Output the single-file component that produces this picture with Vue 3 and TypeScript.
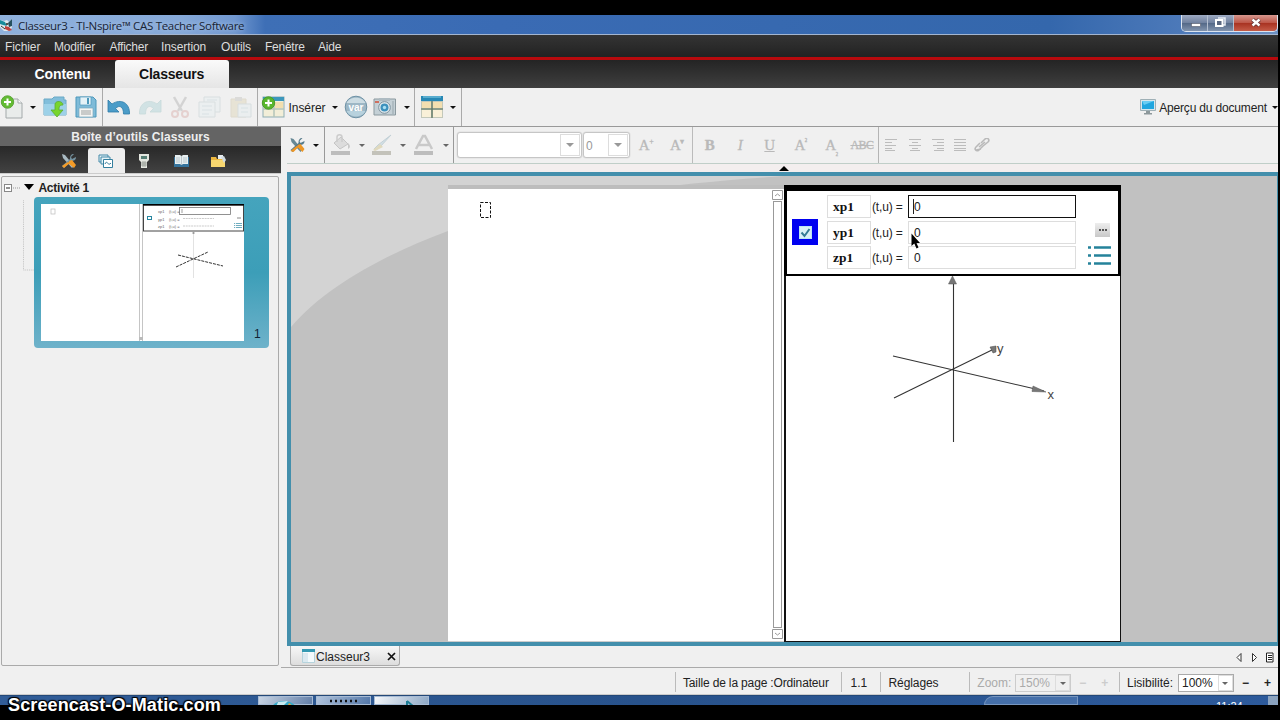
<script setup lang="ts">
interface MenuItem { label: string; cls: string }

const menus: MenuItem[] = [
  { label: 'Fichier', cls: 'm-file' },
  { label: 'Modifier', cls: 'm-edit' },
  { label: 'Afficher', cls: 'm-view' },
  { label: 'Insertion', cls: 'm-insert' },
  { label: 'Outils', cls: 'm-tools' },
  { label: 'Fenêtre', cls: 'm-window' },
  { label: 'Aide', cls: 'm-help' },
]
const params: string[] = ['xp1', 'yp1', 'zp1']
const aligns: string[] = [
  'M0 1.5h12M0 4.5h7M0 7.5h11M0 10.5h7M0 12.5h10',
  'M0 1.5h12M3 4.5h6M0 7.5h12M3 10.5h6M1 12.5h10',
  'M0 1.5h12M5 4.5h7M1 7.5h11M5 10.5h7M2 12.5h10',
  'M0 1.5h12M0 4.5h12M0 7.5h12M0 10.5h12M0 12.5h12',
]
</script>

<template>
  <div class="screen">
    <header class="titlebar">
      <svg class="app-icon" width="14" height="14" viewBox="0 0 14 14"><path d="M0 2l4 1 3-1 2 2 3-3v8l-2 4H4L0 9z" fill="#dfe9ee" /><path d="M0 2l5 2 2 4-4-1-3-1z" fill="#178a9c" /><path d="M8 5l4-4v7l-3 1z" fill="#26515f" /><path d="M5 8l4 1 3 3-3 1-4-2z" fill="#c0413d" /><path d="M1 8l4 3" stroke="#333" /><circle cx="7" cy="6" r="1" fill="#222" /></svg>
      <span class="app-title">Classeur3 - TI-Nspire™ CAS Teacher Software</span>
      <div class="win-btns">
        <span class="wb"><svg width="27" height="16" viewBox="0 0 27 16"><rect x="9.500" y="8.500" width="9" height="3" fill="#fff" stroke="#555b6b" stroke-width=".6" /></svg></span>
        <span class="wb wb-max"><svg width="26" height="16" viewBox="0 0 26 16"><path d="M10 3h7v7h-2" fill="none" stroke="#e8edf5" stroke-width="1.500" /><rect x="8" y="5" width="6.500" height="6" fill="#596780" stroke="#fff" stroke-width="2" /></svg></span>
        <span class="wb wb-close"><svg width="43" height="16" viewBox="0 0 43 16"><path d="M18.500 4.500l7 6m0-6l-7 6" stroke="#5d3034" stroke-width="4" /><path d="M18.500 4.500l7 6m0-6l-7 6" stroke="#fff" stroke-width="2.400" /></svg></span>
      </div>
    </header>
    <nav class="menubar">
      <span v-for="m in menus" :key="m.label" :class="m.cls">{{ m.label }}</span>
    </nav>
    <div class="maintabs">
      <span class="mt-contents">Contenu</span>
      <span class="mt-active">Classeurs</span>
    </div>

    <div class="toolbar">
      <svg width="24" height="24" viewBox="0 0 24 24"><path d="M6 4h12l4 4v15H6z" fill="#e9eceb" stroke="#a3a9aa" /><path d="M18 4v4h4" fill="#fff" stroke="#a3a9aa" /><circle cx="7.500" cy="7" r="6.200" fill="#62bc32" stroke="#5fa53c" /><path d="M7.500 3.500v7M4 7h7" stroke="#fff" stroke-width="2" /></svg>
      <i class="caret"></i>
      <svg width="24" height="22" viewBox="0 0 24 22"><path d="M1 3h8l2-2h10v3h2v15H1z" fill="#82bedb" stroke="#6aa9c6" /><path d="M1 8h22v11H1z" fill="#9dd1e8" /><path d="M20 9c0-4-7-5-8-1v6H8l6 7 6-7h-4c0-4 1-5 4-5z" fill="#78d52d" stroke="#5cab32" stroke-width=".8" /></svg>
      <svg width="22" height="22" viewBox="0 0 22 22"><path d="M1 1h17l3 3v17H1z" fill="#7fbbd8" stroke="#4d98bb" /><path d="M5 1h11v8H5z" fill="#e5f2f7" stroke="#4d98bb" stroke-width=".7" /><path d="M12 2h2v6h-2z" fill="#4d98bb" /><path d="M4 12h14v9H4z" fill="#f5f5f3" stroke="#7ca9bd" stroke-width=".7" /><path d="M6 14h10v5H6z" fill="#c9cbca" /></svg>
      <i class="sep"></i>
      <svg width="24" height="18" viewBox="0 0 24 18"><path d="M1 2v12h11L8.500 10.500c4-4 8-2 8 5.500h6C23 5 14 0 5 6z" fill="#4b9cc8" stroke="#2d7ca8" stroke-width=".8" /></svg>
      <svg class="faded" width="24" height="18" viewBox="0 0 24 18"><path d="M23 2v12H12l3.500-3.500c-4-4-8-2-8 5.500h-6C1 5 10 0 19 6z" fill="#a5ced3" stroke="#8bbabd" stroke-width=".8" /></svg>
      <svg class="faded" width="20" height="22" viewBox="0 0 20 22"><path d="M4 1l8 14M16 1L8 15" stroke="#aaa" stroke-width="2.500" /><circle cx="5" cy="18" r="3" fill="none" stroke="#d6a4a0" stroke-width="2" /><circle cx="15" cy="18" r="3" fill="none" stroke="#d6a4a0" stroke-width="2" /></svg>
      <svg class="faded" width="24" height="22" viewBox="0 0 24 22"><path d="M6 1h16v15H6z" fill="#e5eef0" stroke="#b8c6ca" /><path d="M1 6h16v15H1z" fill="#e5eef0" stroke="#b8c6ca" /><path d="M4 10h10M4 14h10M4 18h7M9 4h10" stroke="#b8cdd4" /></svg>
      <svg class="faded" width="22" height="22" viewBox="0 0 22 22"><path d="M1 3h15v18H1z" fill="#dcd0ae" stroke="#c6bc9d" /><path d="M5 1h7v4H5z" fill="#bdbdb8" /><path d="M8 8h13v13H8z" fill="#e2edef" stroke="#b4c4c9" /><path d="M11 12h7M11 16h7" stroke="#b8cdd4" /></svg>
      <i class="sep"></i>
      <svg class="ins" width="24" height="24" viewBox="0 0 24 24"><rect x="2" y="2" width="21" height="20" fill="#f2eed8" stroke="#8faeb4" /><path d="M2 2h21v4H2z" fill="#3c97bc" /><path d="M2 14h21M13 6v16" stroke="#b4c5b9" stroke-width="1.500" /><path d="M14 7h8v6h-8z" fill="#f2dfaf" /><circle cx="7.500" cy="8" r="6.200" fill="#58b62d" stroke="#4b9c2a" /><path d="M7.500 4.500v7M4 8h7" stroke="#fff" stroke-width="2" /></svg>
      <span class="t-insert">Insérer</span>
      <i class="caret"></i>
      <svg width="24" height="24" viewBox="0 0 24 24"><circle cx="12" cy="12" r="10.800" fill="#9db7c5" stroke="#6d91a5" /><path d="M2.500 8c3-7 16-7 19 0z" fill="#ccdce3" /><path d="M2.500 16c3 7 16 7 19 0z" fill="#b7d1dd" /><text x="12" y="15.500" text-anchor="middle" class="var-text">var</text></svg>
      <svg width="24" height="20" viewBox="0 0 24 20"><path d="M1 2h21.500v16H1z" fill="#c4d0d6" stroke="#8b999f" /><path d="M6 1h11v3H6z" fill="#aebbc2" /><path d="M2 4h4v2H2z" fill="#cf6f5f" /><path d="M20 4v13" stroke="#98a6ad" /><circle cx="11.500" cy="10.500" r="5.800" fill="#e6edf0" stroke="#7b909d" /><circle cx="11.500" cy="10.500" r="4" fill="#3d91bd" /><circle cx="11.500" cy="10.500" r="1.700" fill="#a9dff2" /></svg>
      <i class="caret"></i>
      <i class="sep"></i>
      <svg width="22" height="22" viewBox="0 0 22 22"><path d="M0 0h22v22H0z" fill="#c3c8ba" /><path d="M0 0h22v5H0z" fill="#2788b5" /><path d="M2 1h18" stroke="#8ad1e8" /><path d="M1 6h9v6H1zM12 6h9v6h-9z" fill="#f3dfb0" /><path d="M1 14h9v7H1zM12 14h9v7h-9z" fill="#f9f0d8" /><path d="M11 5v17M0 13h22" stroke="#55705d" stroke-width="1.200" /></svg>
      <i class="caret"></i>
      <i class="sep"></i>
      <span></span>
      <svg width="16" height="16" viewBox="0 0 16 16"><path d="M.5.5h15v11H.5z" fill="#d6e7ed" stroke="#9fb0b6" /><path d="M2 2h12v8H2z" fill="#20a6df" /><path d="M2 2h12L4 6z" fill="#68cdf3" /><path d="M6 12h4v2h2v1.500H4V14h2z" fill="#8d989b" /></svg>
      <span class="t-preview">Aperçu du document</span>
      <i class="caret last"></i>
    </div>

    <main class="body">
      <aside class="sidebar">
        <h2>Boîte d’outils Classeurs</h2>
        <div class="side-tabs">
          <span><svg width="16" height="16" viewBox="0 0 16 16"><path d="M1 1l3 1 9 11-2 2L2 5z" fill="#a9bac2" /><path d="M13 1l-3 3 1 2 4-2c0 3-2 4-5 4L3 15l-2-2 8-7c0-3 1-5 4-5z" fill="#75929f" /><path d="M8 8l3-1 4 5-2 3-5-4zM7 9l2 1-6 5-2-2z" fill="#f49b27" /></svg></span>
          <span class="on"><svg width="16" height="15" viewBox="0 0 16 15"><path d="M1 1h9v7H1z" fill="#e6f3f7" stroke="#4389a8" /><path d="M3 3h9v7H3z" fill="#e6f3f7" stroke="#4389a8" /><path d="M5.500 5.500h9v8h-9z" fill="#fff" stroke="#347f9e" /><path d="M7 10c2-5 3 3 6-1" fill="none" stroke="#357b98" /></svg></span>
          <span><svg width="10" height="14" viewBox="0 0 10 14"><path d="M0 0h10v6L8 8v6H2V8L0 6z" fill="#e3e6df" /><path d="M2 2h6v3H2z" fill="#567e74" /><path d="M4 7v6M6 7v6M2 9h6M2 11h6" stroke="#848984" stroke-width=".7" /></svg></span>
          <span><svg width="15" height="12" viewBox="0 0 15 12"><path d="M0 2l7 1 8-1v10H0z" fill="#35739c" /><path d="M1 0h5l1.500 1L9 0h5v9H9l-1.500 1L6 9H1z" fill="#e7eff1" /><path d="M7.500 1v9M2 3h4M2 5h4M2 7h4M9 3h4M9 5h4M9 7h4" stroke="#aab9bf" stroke-width=".7" /></svg></span>
          <span><svg width="16" height="14" viewBox="0 0 16 14"><path d="M0 3h5l1 2h8v8H0z" fill="#edb73f" /><path d="M7 1h5v4H7z" fill="#e8edf0" /><path d="M0 6h14v7H0z" fill="#f8d770" /><path d="M10 3l3-1 2 4-2 3z" fill="#d1dbe1" /></svg></span>
        </div>
        <section class="tree">
          <div class="tree-row"><svg width="35" height="14" viewBox="0 0 35 14"><rect x="1.500" y="3.500" width="7" height="7" fill="#fff" stroke="#888" /><path d="M3 7h4" stroke="#222" /><path d="M10 7h8" stroke="#999" stroke-dasharray="1 1" /><path d="M21 3h10l-5 6z" fill="#000" /></svg><span>Activité 1</span></div>
          <div class="card-row">
            <svg class="branch" width="12" height="80" viewBox="0 0 12 80"><path d="M.500 0v76H12" fill="none" stroke="#bbb" stroke-dasharray="1 1" /></svg>
            <div class="card">
              <svg width="203" height="137" viewBox="0 0 203 137"><path d="M0 0h203v137H0z" fill="#fff" /><rect x="10" y="5" width="4" height="5" fill="none" stroke="#bbb" stroke-width=".7" /><path d="M98.500 0v137M101.500 0v137" stroke="#c5c5c5" /><path d="M98 133h4v3h-4z" fill="#bbb" /><rect x="102.500" y="1" width="100" height="26" fill="#fff" stroke="#444" /><path d="M102 0h101v1.500H102z" /><rect x="106.500" y="12.500" width="4" height="3" fill="#fff" stroke="#27869f" /><rect x="138.500" y="3.500" width="51" height="7" fill="#fff" stroke="#777" stroke-width=".8" /><path d="M141 5v4" stroke="#777" stroke-width=".7" /><g class="tiny"><text x="117" y="9">xp1</text><text x="128" y="9">(t,u) =</text><text x="117" y="16.500">yp1</text><text x="128" y="16.500">(t,u) =</text><text x="117" y="24">zp1</text><text x="128" y="24">(t,u) =</text></g><path d="M142 14.500h31M142 22h31" stroke="#ccc" stroke-width="1.200" stroke-dasharray="2 .7" /><path d="M196 14h4" stroke="#888" /><path d="M193 19.500h8M193 21.500h8M193 23.500h8" stroke="#4a98ae" stroke-width=".8" stroke-dasharray="1.200 .8 6" /><path d="M152.500 28v46" stroke="#e2e2e2" /><path d="M151.500 29h2" stroke="#555" /><path d="M137 51l45 11M135 63l32-15" fill="none" stroke="#333" stroke-dasharray="3 1" /></svg>
              <b>1</b>
            </div>
          </div>
        </section>
      </aside>

      <section class="work">
        <div class="format">
          <svg width="17" height="16" viewBox="0 0 16 16"><path d="M1 1l3 1 9 11-2 2L2 5z" fill="#668895" /><path d="M13 1l-3 3 1 2 4-2c0 3-2 4-5 4L3 15l-2-2 8-7c0-3 1-5 4-5z" fill="#547989" /><path d="M8 8l3-1 4 5-2 3-5-5zM7 9l2 1-5 5-3-1z" fill="#ee9624" /></svg>
          <i class="caret"></i><i class="sep dark"></i>
          <svg width="22" height="22" viewBox="0 0 22 22"><path d="M4 9l7-6 7 7-8 5z" fill="#dcdcdc" stroke="#c5c5c5" /><path d="M7 8V3c0-3 5-3 5 0v5" fill="none" stroke="#ccc" stroke-width="1.500" /><path d="M18 9c3 3 2 5 0 6z" fill="#c9c9c9" /><path d="M1 17h19v4H1z" fill="#bdbdbd" /></svg>
          <i class="caret soft"></i>
          <svg width="22" height="22" viewBox="0 0 22 22"><path d="M20 1L9 13l-4 3-2-1 4-4z" fill="#d3e0e6" stroke="#c2d0d6" /><path d="M9 10l3 3-8 4-2-1z" fill="#e0d9bd" /><path d="M1 17h19v4H1z" fill="#c3c2ba" /></svg>
          <i class="caret soft"></i>
          <svg width="22" height="22" viewBox="0 0 22 22"><path d="M3 15L10 2h2l7 13M6 11h10" fill="none" stroke="#c9c9c9" stroke-width="2.500" /><path d="M1 17h19v4H1z" fill="#bdbdbd" /></svg>
          <i class="caret soft"></i><i class="sep dark"></i><span></span>
          <div class="combo"><span></span><i><b></b></i></div><span></span>
          <div class="combo small"><span>0</span><i><b></b></i></div>
          <span class="fmt">A<sup>+</sup></span><span class="fmt">A<sup>▾</sup></span><i class="sep"></i>
          <span class="fmt bold">B</span><span class="fmt ital">I</span><span class="fmt under">U</span>
          <span class="fmt">A<sup>²</sup></span><span class="fmt">A<sub>₂</sub></span><span class="fmt strike">ABC</span><i class="sep wide"></i>
          <svg v-for="d in aligns" :key="d" width="12" height="14" viewBox="0 0 12 14"><path :d="d" stroke="#bcbcbc" stroke-width="1.100" /></svg>
          <svg width="16" height="14" viewBox="0 0 16 14"><path d="M7 5l4-4c3-2 5 1 3 3l-5 4M9 8l-4 4c-3 2-5-1-3-3l4-4M5 9l6-5M2 12l5-1" fill="none" stroke="#b9b9b9" stroke-width="1.600" /></svg>
        </div>
        <div class="collapse"><i></i></div>
        <div class="doc">
          <svg class="backdrop" width="986" height="466" viewBox="0 0 986 466"><path d="M0 151C35 110 95 78 157 55 235 27 350 10 480 1L493 0h494v466H0z" fill="#c1c1c1" /></svg>
          <div class="page">
            <div class="notes">
              <div class="note-body"><svg width="12" height="16" viewBox="0 0 12 16"><path d="M.5.5h10v15H.5z" fill="none" stroke="#111" stroke-dasharray="3 1.500" /></svg></div>
              <div class="scroll">
                <svg width="11" height="10" viewBox="0 0 11 10"><path d="M.5.5h10v9H.5z" fill="#fff" stroke="#999" /><path d="M3 6l2.500-2L8 6" fill="none" stroke="#999" /></svg>
                <span class="track"></span>
                <svg width="11" height="10" viewBox="0 0 11 10"><path d="M.5.5h10v9H.5z" fill="#fff" stroke="#999" /><path d="M3 4l2.500 2L8 4" fill="none" stroke="#999" /></svg>
              </div>
            </div>
            <div class="graph">
              <div class="entry">
                <div class="check"><svg width="13" height="13" viewBox="0 0 13 13"><path d="M0 0h13v13H0z" fill="#bce5f3" /><path d="M1 1h11v11H1z" fill="#d9f0f7" /><path d="M2.500 6.500l3 3.500 5-7" fill="none" stroke="#347b95" stroke-width="2" /></svg></div>
                <div class="params">
                  <div v-for="(p, i) in params" :key="p" class="param">
                    <span class="pname">{{ p }}</span><span class="parg">(t,u) =</span><span class="pval" :class="{ focus: i === 0 }">0</span>
                  </div>
                </div>
                <div class="entry-actions">
                  <span class="dots"><i></i><i></i><i></i></span>
                  <svg width="24" height="19" viewBox="0 0 24 19"><path d="M0 1.500h3M6 1.500h17M0 9.500h3M6 9.500h17M0 17.500h3M6 17.500h17" stroke="#25829b" stroke-width="2.600" /></svg>
                </div>
              </div>
              <svg class="axes" width="334" height="365" viewBox="0 0 334 365"><g stroke="#333" stroke-width="1.100"><path d="M167.500 3v163" /><path d="M107 80l151 35M108 122l102-50" /></g><path d="M166.500 0l4 8h-8z" fill="#777" stroke="#555" stroke-width=".5" /><path d="M247 110l13 6-14-.500z" fill="#777" stroke="#555" stroke-width=".5" /><path d="M204 71l6-1v6l-3 1z" fill="#777" stroke="#444" stroke-width=".5" /><text x="211" y="77">y</text><text x="261.500" y="122.500">x</text></svg>
            </div>
          </div>
        </div>
        <div class="doc-tabs">
          <div class="doc-tab"><svg width="13" height="14" viewBox="0 0 13 14"><path d="M.5.5h12v13H.5z" fill="#f4fafc" stroke="#b5d3dc" /><path d="M0 0h13v3H0z" fill="#3499b2" /><path d="M1 4h5v9H1z" fill="#dbe9f0" /></svg><span>Classeur3</span><svg class="x" width="9" height="9" viewBox="0 0 9 9"><path d="M1 1l7 7m0-7L1 8" stroke="#111" stroke-width="1.700" /></svg></div>
          <svg class="pager" width="38" height="11" viewBox="0 0 38 11"><path d="M5 1.500v8l-4-4zM16.500 1.500v8l4-4z" fill="#fff" stroke="#333" /><path d="M30.500 1h6.500v9h-6.500z" fill="#fff" stroke="#222" /><path d="M32 3.500h4M32 5.500h4M32 7.500h4" stroke="#222" /></svg>
        </div>
      </section>
    </main>

    <footer class="status">
      <span class="st size"><em>Taille de la page :Ordinateur</em></span><span class="st num">1.1</span><span class="st settings"><em>Réglages</em></span>
      <span class="st zoom"><em>Zoom:</em><span class="pct">150%<i><b></b></i></span><u>−</u><u>+</u></span>
      <span class="st read"><em>Lisibilité:</em><span class="pct">100%<i><b></b></i></span><u>−</u><u>+</u></span>
    </footer>
    <div class="taskbar">
      <span class="task"><svg width="55" height="10" viewBox="0 0 55 10"><path d="M14 10c3-8 20-8 24 0z" fill="#35aac9" /><path d="M20 5l10-1-6 6h-6z" fill="#c9eaf0" /><path d="M31 6l5 4h-7z" fill="#e8a43c" /></svg></span>
      <span class="task t2"><svg width="55" height="10" viewBox="0 0 55 10"><path d="M14 4h28" stroke="#111" stroke-width="2.500" stroke-dasharray="2 3" /><path d="M16 8h23" stroke="#9eafc6" stroke-width="2" /></svg></span>
      <span class="task t3"><svg width="55" height="10" viewBox="0 0 55 10"><path d="M12 9h14" stroke="#222" stroke-width="2" /><path d="M33 4v6M33 4l7 6" fill="none" stroke="#1c7d95" stroke-width="2" /></svg></span>
      <span class="band"></span><span class="clock">11:24</span><span class="desk"></span>
    </div>
    <div class="watermark">Screencast-O-Matic.com</div>
    <svg class="cursor" width="10" height="17" viewBox="0 0 10 17"><path d="M.5.5v12.500l2.800-2.500 2.200 5 2-1-2-4.500H9z" fill="#000" /></svg>
  </div>
</template>

<style>
html, body { margin: 0; background: #000; overflow: hidden; }
</style>

<style scoped>
* { box-sizing: border-box; }
.screen { position: relative; width: 1280px; height: 720px; padding: 15px 2px 0 0; background: #000; overflow: hidden; font: 12px/14px "Liberation Sans", Arial, sans-serif; color: #222; white-space: nowrap; }
svg { display: block; flex: none; }
i, em { font-style: normal; }
.titlebar { height: 20px; display: flex; background: linear-gradient(90deg, #8fb1dc 0, #86a9d8 180px, #7198d0 235px, #3e6fb6 265px, #3a6bb4 500px, #3467ac 1050px, #4c79b9 1180px, #6d92c4); border-bottom: 1px solid #a3b5d0; }
.app-icon { margin: 3px 4px 0 0; width: 14px; }
.app-title { flex: 1; font: 11.500px/21px "Open Sans", "Noto Sans", sans-serif; letter-spacing: -.31px; color: #182435; text-shadow: 0 0 4px #b5cceb; }
.win-btns { display: flex; width: 97px; height: 17px; border: 1px solid #dce4ef; border-top: 0; border-radius: 0 0 5px 5px; overflow: hidden; }
.wb { width: 26px; height: 16px; background: linear-gradient(#9daac2, #70819f 50%, #536887 51%, #8294ae); border-right: 1px solid #b4bfd0; }
.wb-close { width: 44px; border: 0; background: linear-gradient(#d5968d, #bd5546 50%, #a83221 51%, #c45c48); }
.menubar { height: 22px; display: flex; align-items: center; padding: 2px 0 0 5px; background: linear-gradient(#343434, #222); color: #ddd; }
.m-file { width: 49px; letter-spacing: -.1px; } .m-edit { width: 55.500px; letter-spacing: -.2px; } .m-view { width: 51.500px; letter-spacing: -.25px; } .m-insert { width: 60px; letter-spacing: -.1px; } .m-tools { width: 44px; letter-spacing: -.15px; } .m-window { width: 53px; letter-spacing: -.25px; } .m-help { letter-spacing: -.2px; }
.maintabs { height: 31px; border-top: 3px solid #b80a0d; display: flex; background: linear-gradient(#242424, #3f3f3f); font: bold 14px/29px "Liberation Sans", Arial, sans-serif; color: #fff; }
.mt-contents { width: 115px; padding-left: 34.500px; letter-spacing: -.1px; }
.mt-active { width: 114px; padding-left: 24px; background: linear-gradient(#fafafa, #e5e5e5); border-radius: 3px 3px 0 0; color: #111; letter-spacing: -.2px; }
.toolbar { height: 39px; border-bottom: 1px solid #999; background: #f0f0f0; display: grid; grid-template-columns: 24px 17px 28px 33px 1px 31px 31px 29px 31px 32px 1px 30px 40px 14px 28px 30px 14px 1px 34px 7px 6px 1fr 20px 110px 10px; align-items: center; justify-items: center; }
.t-insert { letter-spacing: -.05px; margin: 1px 2px 0 0; }
.t-preview { letter-spacing: -.17px; margin-top: 1px; }
.var-text { font: bold 10px "Liberation Sans", sans-serif; fill: #fff; }
.faded { opacity: .4; }
.caret { width: 0; height: 0; border: 3px solid transparent; border-top: 3px solid #111; border-bottom: 0; }
.caret.soft { border-top-color: #666; }
.caret.last { margin-left: 3px; }
.sep { height: 38px; width: 1px; background: #aaa; justify-self: end; }
.body { height: 541px; display: flex; background: #f0f0f0; }
.sidebar { width: 281px; flex: none; }
.sidebar h2 { margin: 0; height: 19px; background: #646464; color: #eee; text-align: center; font: bold 12px/20px "Liberation Sans", Arial, sans-serif; letter-spacing: .08px; }
.side-tabs { height: 28px; padding: 1px 0 0 50px; display: flex; background: linear-gradient(#282828, #424242); border-bottom: 1px solid #ccc; }
.side-tabs span { width: 37.500px; display: flex; align-items: center; justify-content: center; padding-top: 1px; }
.side-tabs .on { background: #eee; border-radius: 3px 3px 0 0; margin-top: 1px; }
.tree { margin: 2px 0 0 1px; width: 278px; height: 490px; border: 1px solid #aaa; border-radius: 2px; }
.tree-row { height: 20px; display: flex; align-items: center; font-weight: bold; padding-left: 1px; color: #222; }
.tree-row span { margin: 2px 0 0 .5px; letter-spacing: -.3px; }
.tree-row svg { margin-top: 1px; }
.card-row { display: flex; padding-left: 21px; }
.branch { flex: none; width: 11px; }
.card { width: 235px; height: 151px; padding: 7px; display: flex; border-radius: 4px; background: linear-gradient(#45a4bd, #3c9eb8 50%, #6eb2ca); }
.card b { align-self: flex-end; margin: 0 0 0 10px; font-weight: normal; color: #123; }
.tiny { font: 4px "Liberation Sans", sans-serif; fill: #666; }
.work { flex: 1; padding-left: 6px; }
.format { height: 37px; border-bottom: 1px solid #c0cec8; display: grid; grid-template-columns: 20px 17px 1px 32px 10px 30px 12px 30px 14px 1px 3px 125px 1px 47px 32px 30px 1px 33px 28px 31px 31px 31px 30px 2px 24px 23px 23px 21px 24px; align-items: center; justify-items: center; }
.format .sep { height: 36px; background: #bbb; }
.format .sep.dark { background: #999; }
.format .sep.wide { width: 1px; background: #b4b4b4; }
.combo { width: 125px; height: 26px; display: flex; border: 1px solid #c6c6c6; border-radius: 3px; background: #fff; color: #999; align-items: center; padding: 1px; box-shadow: 0 0 0 .500px #ddd; }
.combo span { flex: 1; padding: 1px 0 0 1px; }
.combo i { width: 20px; height: 22px; border: 1px solid #ddd; display: flex; align-items: center; justify-content: center; }
.combo b { border: 4px solid transparent; border-top-color: #999; border-bottom: 0; }
.combo.small { width: 47px; }
.fmt { font: 15px/18px "Liberation Serif", serif; color: #b9b9b9; letter-spacing: -.5px; -webkit-text-stroke: .3px #b9b9b9; }
.fmt sup, .fmt sub { font-size: 8px; line-height: 0; }
.fmt.bold { font-weight: bold; } .fmt.ital { font-style: italic; } .fmt.under { text-decoration: underline; } .fmt.strike { font-size: 12px; text-decoration: line-through; text-decoration-thickness: 1px; }
.collapse { height: 8px; padding: 2px 0 0 492px; background: #f3eeee; }
.collapse i { display: block; width: 0; border: 5px solid transparent; border-bottom: 5px solid #000; border-top: 0; }
.doc { position: relative; width: 991px; height: 474px; border: 4px solid #438fac; border-right-width: 1px; background: #d3d3d3; padding: 9px 0 0 157px; }
.backdrop { position: absolute; left: 0; top: 0; }
.page { position: relative; width: 673px; height: 457px; display: flex; }
.notes { width: 336px; background: #fff; border-top: 4px solid #bdbdbd; border-bottom: 1px solid #ccc; display: flex; }
.note-body { flex: 1; padding: 13px 0 0 32px; }
.scroll { width: 12px; padding-top: 1px; display: flex; flex-direction: column; }
.track { width: 9px; height: 427px; border: 1px solid #999; margin: 1px 0 1px 1px; background: #fff; }
.graph { width: 337px; background: #fff; border: solid #111; border-width: 0 1px 1px 2px; }
.entry { margin: 0 -1px 0 -2px; width: 337px; height: 91px; border: solid #000; border-width: 6px 3px 2px; display: flex; background: #fff; }
.check { margin: 28px 9px 0 5px; width: 26px; height: 26px; background: #0000f0; display: flex; align-items: center; justify-content: center; }
.params { padding-top: 4px; display: flex; flex-direction: column; gap: 2.500px; }
.param { display: flex; height: 23px; align-items: center; }
.pname { width: 44px; height: 23px; border: 1px solid #ddd; padding-left: 5px; font: bold 13.500px/22px "Liberation Serif", serif; color: #111; }
.parg { width: 37px; padding: 1px 0 0 1px; letter-spacing: -.15px; }
.pval { width: 168px; height: 23px; border: 1px solid #ddd; padding-left: 5px; line-height: 22px; }
.pval.focus { border-color: #111; }
.pval.focus::before { content: ""; display: inline-block; width: 1px; height: 15px; margin: 0 0 0 -1px; background: #222; vertical-align: -3px; }
.entry-actions { margin: 32px 0 0 12px; display: flex; flex-direction: column; }
.dots { margin: 0 0 9px 7px; width: 15px; height: 14px; background: linear-gradient(#eee, #c8c8c8); display: flex; gap: 1px; justify-content: center; align-items: center; }
.dots i { width: 2px; height: 2px; background: #555; }
.axes text { font: 13px "Liberation Sans", sans-serif; fill: #444; }
.doc-tabs { height: 22px; border-bottom: 1px solid #aaa; margin-left: -6px; padding-left: 9px; display: flex; justify-content: space-between; }
.doc-tab { width: 110px; height: 20px; border: 1px solid #aaa; border-top: 0; border-radius: 0 0 3px 3px; background: linear-gradient(#f7f7f7, #ddd); display: flex; align-items: center; padding: 1px 0 0 11px; }
.doc-tab span { margin: 1px 0 0 1px; width: 71px; }
.doc-tab .x { margin-top: 1px; }
.pager { margin: 6px 4px 0 0; }
.status { height: 27px; display: flex; align-items: center; background: #f0f0f0; border-bottom: 1px solid #ccc; padding: 2px 0 0 675px; }
.st { height: 20px; border-left: 1px solid #bbb; display: flex; align-items: center; padding-top: 2px; }
.size { width: 166px; padding-left: 7px; letter-spacing: -.15px; } .num { width: 39px; padding-left: 9px; } .settings { width: 90px; padding-left: 8px; letter-spacing: -.1px; }
.zoom { width: 150px; padding-left: 7px; color: #aaa; } .read { padding-left: 7px; }
.zoom em { width: 38px; } .read em { width: 51px; }
.pct { width: 56px; height: 18px; border: 1px solid #aaa; padding-left: 3px; line-height: 17px; display: flex; }
.pct i { margin-left: auto; width: 15px; border: 1px solid #ddd; display: flex; align-items: center; justify-content: center; }
.pct b { border: 3px solid transparent; border-top-color: #666; border-bottom: 0; }
.read .pct { background: #fff; } .zoom .pct { border-color: #ccc; }
.st u { width: 22px; padding-left: 8px; text-decoration: none; font-weight: bold; }
.zoom u { color: #ccc; }
.taskbar { height: 10px; display: flex; overflow: hidden; padding-left: 258px; background: linear-gradient(90deg, #315d98, #28528b 50%, #2d5a9b); border-top: 1px solid #234878; }
.task { width: 55px; margin-right: 3px; background: linear-gradient(120deg, #c9d5e4, #637fa8); border: 1px solid #a7bbd4; }
.task svg { margin: 0 -1px; }
.t2 { background: linear-gradient(120deg, #b1c4dd, #5478a9); } .t3 { background: linear-gradient(120deg, #f5f7fa, #8ea8c5); }
.band { margin-left: 552px; width: 94px; background: #456fa9; border: 1px solid #7796bf; border-radius: 15px 0 0; }
.clock { margin-left: 138px; color: #fff; font-size: 11px; line-height: 20px; }
.desk { margin-left: auto; width: 10px; background: #8ba3bf; }
.watermark { position: absolute; left: 8px; top: 695px; color: #fff; font: bold 18px/20px "Liberation Sans", Arial, sans-serif; letter-spacing: .13px; text-shadow: 1px 1px 1px #000, -1px -1px 1px #000, 1px -1px 1px #000, -1px 1px 1px #000; }
.cursor { position: absolute; left: 911px; top: 233px; }
</style>
